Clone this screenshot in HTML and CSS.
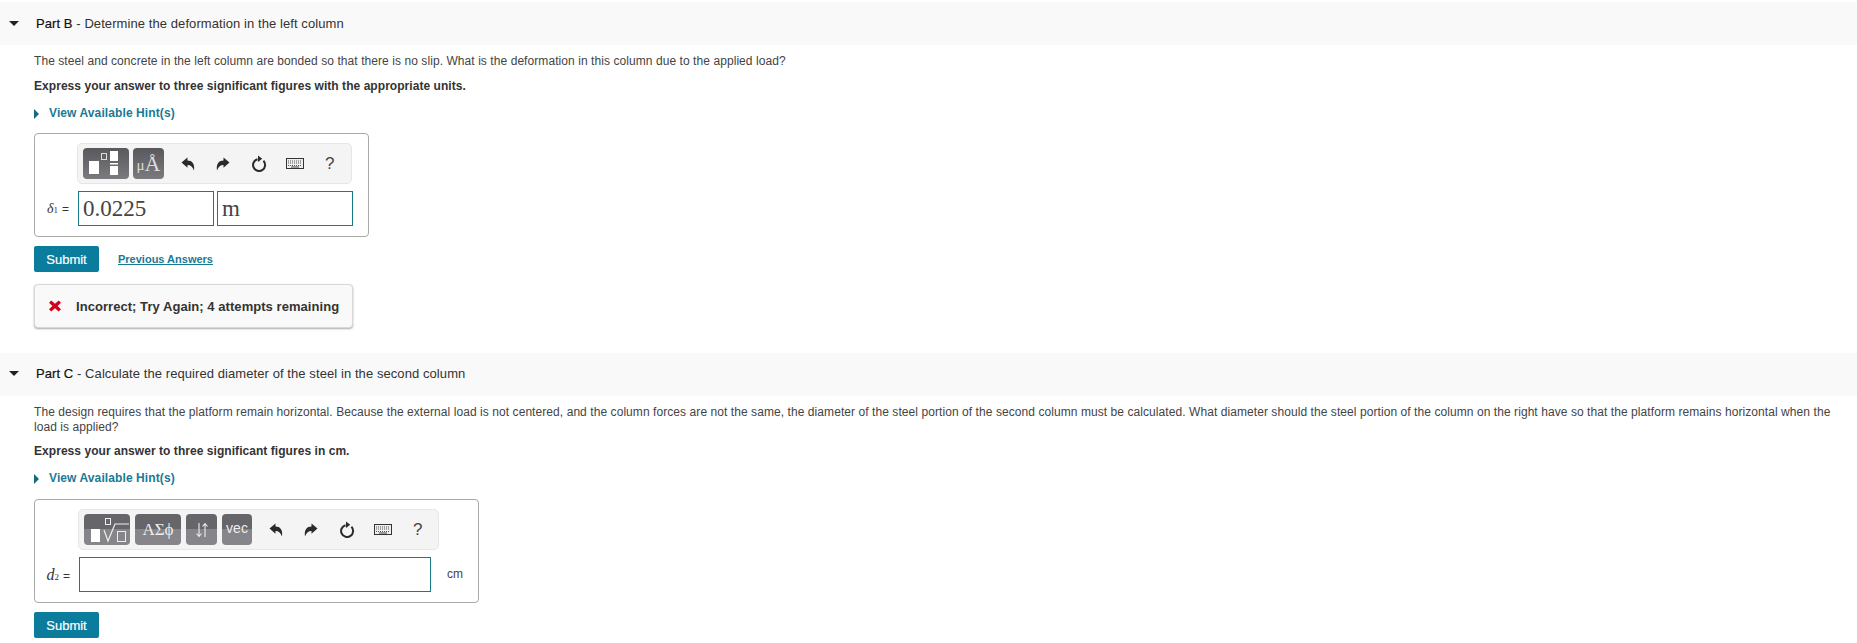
FILE: index.html
```html
<!DOCTYPE html>
<html lang="en">
<head>
<meta charset="utf-8">
<title>Parts B and C</title>
<link rel="stylesheet" href="styles.css">
</head>
<body>
<svg class="defs" width="0" height="0" aria-hidden="true">
  <defs>
    <symbol id="undo" viewBox="0 0 14 14"><path d="M0.5 5.5 6.5 0.5V3.5C11 3.5 14 6.5 13 13.5 11.8 10 9.8 8 6.5 8V10.8Z"/></symbol>
    <symbol id="redo" viewBox="0 0 14 14"><path d="M13.5 5.5 7.5 0.5V3.5C3 3.5 0 6.5 1 13.5 2.2 10 4.2 8 7.5 8V10.8Z"/></symbol>
    <symbol id="reset" viewBox="0 0 16 17"><path d="M12.4 5.8A6 6 0 1 1 6.5 4.2" fill="none" stroke="currentColor" stroke-width="2"/><path d="M7 0.6 11.2 3.8 7 7Z"/></symbol>
    <symbol id="keyboard" viewBox="0 0 18 11"><rect x=".5" y=".5" width="17" height="10" fill="#eee" stroke="#333"/><path d="M2 3h14M2 5h14" stroke="#555" stroke-width="1" stroke-dasharray="1 1"/><path d="M2 7.5h14" stroke="#555" stroke-dasharray="1 1"/><path d="M5 9h8" stroke="#444"/></symbol>
  </defs>
</svg>

<section class="part part-b">
  <h2 class="part-head"><span class="caret-down"></span><span><b class="part-label">Part B</b> - Determine the deformation in the left column</span></h2>
  <div class="part-body">
    <p class="text">The steel and concrete in the left column are bonded so that there is no slip. What is the deformation in this column due to the applied load?</p>
    <p class="text instr">Express your answer to three significant figures with the appropriate units.</p>
    <p class="hint"><span class="caret-right"></span>View Available Hint(s)</p>

    <div class="answer answer-b">
      <div class="toolbar tb-b">
        <span class="tool tool-dark tool-frac">
          <svg width="46" height="30" viewBox="0 0 46 30"><rect x="6" y="12" width="10" height="13" fill="#fff"/><rect x="18.5" y="4.5" width="5" height="6" fill="none" stroke="#ddd"/><rect x="27" y="2" width="8" height="10" fill="#fff"/><rect x="27" y="14" width="8" height="1.5" fill="#fff"/><rect x="27" y="17" width="8" height="9" fill="#fff"/></svg>
        </span>
        <span class="tool tool-dark tool-mu"><span class="mu">μ</span>Å</span>
        <span class="actions actions-b">
          <svg class="ico" width="14" height="14"><use href="#undo"/></svg>
          <svg class="ico" width="14" height="14"><use href="#redo"/></svg>
          <svg class="ico" width="16" height="17"><use href="#reset"/></svg>
          <svg class="ico ico-kb" width="18" height="11"><use href="#keyboard"/></svg>
          <span class="qmark">?</span>
        </span>
      </div>
      <div class="entry">
        <span class="var var-b"><i>δ</i><sub>1</sub> <span class="eq">=</span></span>
        <span class="field field-val">0.0225</span>
        <span class="field field-unit">m</span>
      </div>
    </div>

    <div class="actions-row">
      <span class="submit">Submit</span>
      <a class="prev" href="#">Previous Answers</a>
    </div>

    <div class="alert">
      <svg class="alert-x" width="14" height="14" viewBox="0 0 14 13"><path d="M1 3.2 3.3 1 7 4.3 10.7 1 13 3.2 9.6 6.5 13 9.8 10.7 12 7 8.7 3.3 12 1 9.8 4.4 6.5Z" fill="#d0021b"/></svg>
      <span>Incorrect; Try Again; 4 attempts remaining</span>
    </div>
  </div>
</section>

<section class="part part-c">
  <h2 class="part-head"><span class="caret-down"></span><span><b class="part-label">Part C</b> - Calculate the required diameter of the steel in the second column</span></h2>
  <div class="part-body">
    <p class="text">The design requires that the platform remain horizontal. Because the external load is not centered, and the column forces are not the same, the diameter of the steel portion of the second column must be calculated. What diameter should the steel portion of the column on the right have so that the platform remains horizontal when the load is applied?</p>
    <p class="text instr">Express your answer to three significant figures in cm.</p>
    <p class="hint"><span class="caret-right"></span>View Available Hint(s)</p>

    <div class="answer answer-c">
      <div class="toolbar tb-c">
        <span class="tool tool-split tool-root">
          <svg width="46" height="30" viewBox="0 0 46 30"><rect x="7" y="14" width="9" height="13" fill="#fff"/><rect x="21.5" y="3.5" width="5" height="6" fill="none" stroke="#eee"/><path d="M20 15 24 26 31 9H45" fill="none" stroke="#eee" stroke-width="1.2"/><rect x="33.5" y="16.5" width="8" height="10" fill="none" stroke="#eee"/></svg>
        </span>
        <span class="tool tool-split tool-greek">ΑΣϕ</span>
        <span class="tool tool-split tool-arrows">
          <svg width="14" height="16" viewBox="0 0 14 16"><path d="M4 1V14M1.5 11.5 4 14.5 6.5 11.5M10 15V2M7.5 4.5 10 1.5 12.5 4.5" fill="none" stroke="#eee" stroke-width="1.1"/></svg>
        </span>
        <span class="tool tool-split tool-vec">vec</span>
        <span class="actions actions-c">
          <svg class="ico" width="14" height="14"><use href="#undo"/></svg>
          <svg class="ico" width="14" height="14"><use href="#redo"/></svg>
          <svg class="ico" width="16" height="17"><use href="#reset"/></svg>
          <svg class="ico ico-kb" width="18" height="11"><use href="#keyboard"/></svg>
          <span class="qmark">?</span>
        </span>
      </div>
      <div class="entry">
        <span class="var var-c"><i>d</i><sub>2</sub> <span class="eq">=</span></span>
        <span class="field field-wide"></span>
        <span class="unit">cm</span>
      </div>
    </div>

    <div class="actions-row">
      <span class="submit">Submit</span>
    </div>
  </div>
</section>
</body>
</html>
```
FILE: styles.css
```css
* { box-sizing: border-box; }
html, body { margin: 0; padding: 0; }
body {
  width: 1857px;
  height: 643px;
  overflow: hidden;
  background: #fff;
  color: #333;
  font: 12px/15px "Liberation Sans", Arial, sans-serif;
  padding-top: 2px;
}
.defs { position: absolute; }
.part-c { margin-top: 25px; }
.part-head {
  display: flex;
  align-items: center;
  height: 43px;
  margin: 0;
  padding-left: 9px;
  background: #f9f9f9;
  font-size: 13px;
  font-weight: 400;
  letter-spacing: .08px;
  color: #333;
}
.part-c .part-head { padding-bottom: 2px; }
.part-label { font-weight: 400; color: #111; -webkit-text-stroke: .2px #111; }
.caret-down {
  width: 0;
  height: 0;
  margin-right: 17px;
  border-style: solid;
  border-width: 5px 5px 0;
  border-color: #222 transparent transparent;
}
.part-body { padding: 0 8px 0 34px; }
.text { margin: 0; color: #444; letter-spacing: .07px; }
.part-b .text:first-child { margin-top: 9px; }
.part-c .text:first-child { margin-top: 9px; }
.instr { margin-top: 10px; font-weight: 700; color: #333; letter-spacing: .05px; }
.part-c .instr { margin-top: 9px; }
.hint {
  display: flex;
  align-items: center;
  margin: 12px 0 0;
  font-weight: 700;
  letter-spacing: .1px;
  color: #1a7a94;
}
.caret-right {
  width: 0;
  height: 0;
  margin-right: 10px;
  border-style: solid;
  border-width: 5px 0 5px 5px;
  border-color: transparent transparent transparent #14697f;
}
.answer {
  height: 104px;
  padding: 9px 0 0;
  border: 1px solid #aaa;
  border-radius: 4px;
}
.answer-b { width: 335px; margin-top: 12px; }
.answer-c { width: 445px; margin-top: 13px; }
.toolbar {
  display: flex;
  align-items: center;
  height: 41px;
  padding: 0 5px;
  gap: 4px;
  background: #f4f4f4;
  border: 1px solid #e6e6e6;
  border-radius: 5px;
}
.tb-b { width: 275px; margin-left: 42px; }
.tb-c { width: 361px; margin-left: 43px; gap: 5px; }
.tool {
  display: flex;
  align-items: center;
  justify-content: center;
  height: 31px;
  border-radius: 4px;
  color: #eee;
  flex: none;
}
.tool-dark { background: linear-gradient(#59595d, #7b7b7f); }
.tool-split { background: linear-gradient(#66666a 0 50%, #85858a 50% 100%); }
.tool-frac { width: 46px; }
.tool-mu { width: 31px; font: 22px "Liberation Serif", serif; color: #ddd; }
.mu { font-size: 15px; align-self: flex-end; padding-bottom: 5px; }
.tool-root { width: 46px; }
.tool-greek { width: 46px; font: 17px "Liberation Serif", serif; }
.tool-arrows { width: 31px; }
.tool-vec { width: 30px; font-size: 14px; padding-bottom: 3px; }
.actions {
  display: flex;
  align-items: center;
  gap: 21px;
  color: #222;
  flex: 1;
}
.actions-b { padding-left: 13px; }
.actions-c { padding-left: 12px; }
.ico { fill: #2a2a2a; color: #2a2a2a; flex: none; }
.ico-kb { margin-left: -2px; }
.qmark { font-size: 17px; color: #444; width: 10px; }
.entry { display: flex; align-items: center; margin-top: 7px; }
.var {
  flex: none;
  display: flex;
  align-items: baseline;
  justify-content: flex-end;
  padding-right: 9px;
  gap: 4px;
  font: 14px "Liberation Serif", serif;
}
.var sub { font-size: 9px; margin-left: -4px; line-height: 0; }
.var .eq { font: 12px "Liberation Sans", sans-serif; }
.var-b { width: 43px; }
.var-c { width: 44px; font-size: 16px; }
.field {
  display: block;
  height: 35px;
  padding-left: 4px;
  border: 1px solid #1a7a8c;
  background: #fff;
  font: 23px/33px "Liberation Serif", serif;
  color: #444;
}
.field-val { width: 136px; }
.field-unit { width: 136px; margin-left: 3px; }
.field-wide { width: 352px; }
.unit { margin-left: 16px; color: #444; }
.actions-row { display: flex; align-items: center; gap: 19px; margin-top: 9px; }
.submit {
  display: flex;
  align-items: center;
  justify-content: center;
  width: 65px;
  height: 26px;
  background: #0c7c9c;
  border-radius: 2px;
  color: #fff;
  font-size: 13px;
  -webkit-text-stroke: .2px #fff;
}
.prev { color: #1a7a94; font-size: 11px; font-weight: 700; }
.alert {
  display: flex;
  align-items: center;
  gap: 14px;
  width: 319px;
  height: 44px;
  margin-top: 12px;
  padding-left: 13px;
  background: #f9f9f9;
  border: 1px solid #d8d8d8;
  border-radius: 4px;
  box-shadow: 0 1px 2px #aaa;
  font-size: 13px;
  font-weight: 700;
  letter-spacing: .05px;
  color: #333;
}
.alert-x { flex: none; }
```
